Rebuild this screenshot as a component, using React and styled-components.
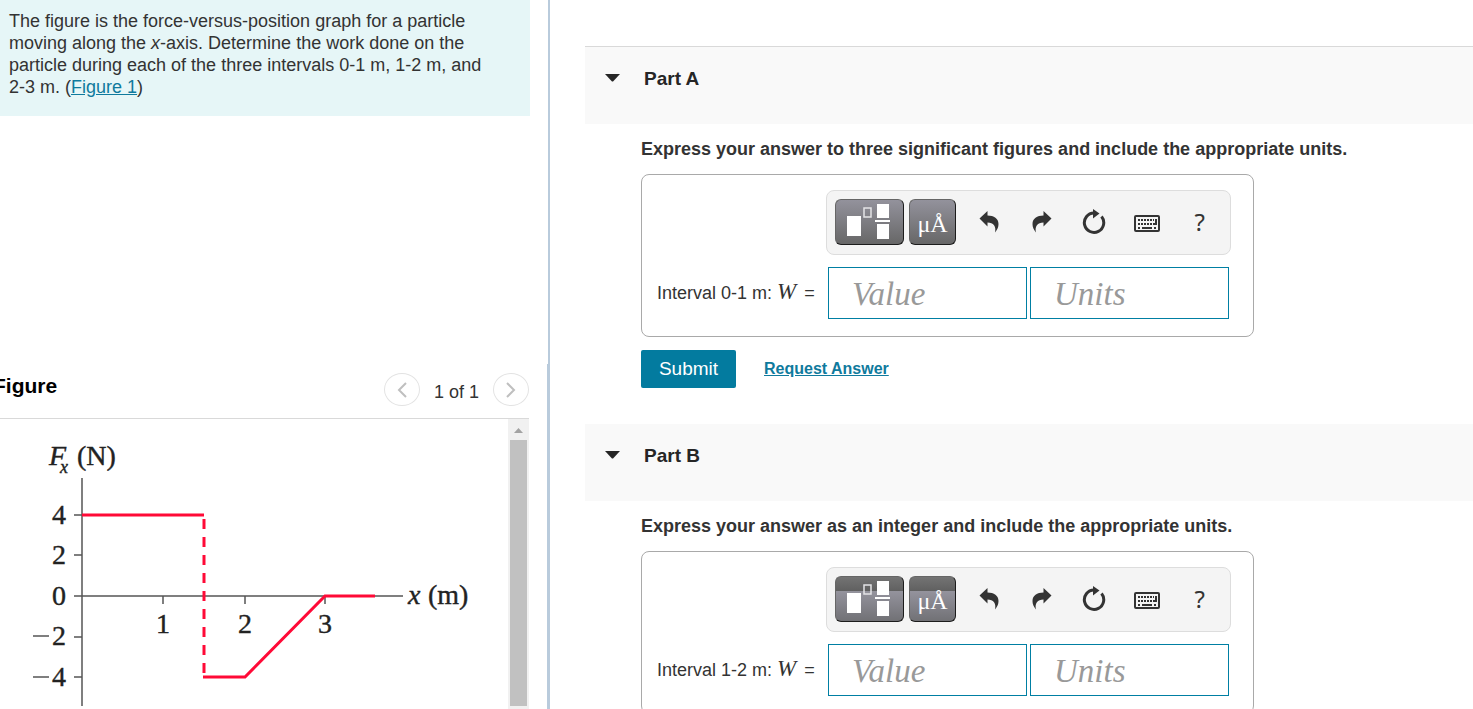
import React from "react";
import styled, { createGlobalStyle } from "styled-components";

const colors = {
    text: "#333333",
    heading: "#262626",
    teal: "#007fa3",
    tealButton: "#037b9f",
    link: "#0f7a9d",
    pale: "#e6f6f7",
    divider: "#b9cbdc",
    band: "#f9f9f9",
    toolbar: "#f4f4f4",
    line: "#d9d9d9",
    plot: "#ff0a37",
};

const sans = `"Liberation Sans", Arial, sans-serif`;
const serif = `"Liberation Serif", "Times New Roman", serif`;

const GlobalStyle = createGlobalStyle`
  * {
    box-sizing: border-box;
  }

  body {
    margin: 0;
    background-color: #ffffff;
    color: ${colors.text};
    font-family: ${sans};
    font-size: 18px;
  }
`;

const Page = styled.div`
  display: grid;
  grid-template-columns: 550px minmax(0, 1fr);
  height: 100vh;
  overflow: hidden;
`;

const Side = styled.aside`
  display: grid;
  grid-template-rows: 364px minmax(0, 1fr);
  min-height: 0;
`;

const ProblemPane = styled.section`
  border-right: 2px solid ${colors.divider};
  padding-right: 18px;
`;

const Problem = styled.p`
  margin: 0;
  padding: 10px 40px 18px 9px;
  background-color: ${colors.pale};
  line-height: 22px;
`;

const Link = styled.a`
  color: ${colors.link};
  text-decoration: underline;
`;

const FigurePane = styled.section`
  display: flex;
  flex-direction: column;
  min-height: 0;
  overflow: hidden;
  border-right: 3px solid ${colors.divider};
  padding-right: 18px;
`;

const FigureHeader = styled.header`
  display: flex;
  align-items: flex-start;
  justify-content: space-between;
  height: 55px;
  padding-top: 9px;
  border-bottom: 1px solid ${colors.line};
`;

const FigureTitle = styled.h2`
  margin: 0 0 0 -7px;
  color: #000000;
  font-size: 21px;
  line-height: 26px;
`;

const Pager = styled.nav`
  display: flex;
  align-items: center;
  gap: 14px;
`;

const PagerLabel = styled.span`
  padding-top: 4px;
  line-height: 22px;
`;

const PagerButton = styled.button`
  display: flex;
  align-items: center;
  justify-content: center;
  width: 36px;
  height: 33px;
  padding: 0;
  border: 1px solid #e3e3e3;
  border-radius: 50%;
  background-color: #ffffff;
`;

const FigureBody = styled.div`
  display: flex;
  flex: 1;
  min-height: 0;
`;

const Plot = styled.svg`
  flex: none;
  width: 508px;
  height: 290px;
  font-family: ${serif};
  font-size: 28px;
  fill: #222222;

  text {
    stroke: #222222;
    stroke-width: 0.4;
  }
`;

const ScrollTrack = styled.div`
  display: flex;
  flex-direction: column;
  flex: 1;
  padding: 0 2px 3px;
  background-color: #f1f1f1;
`;

const ScrollArrow = styled.svg`
  width: 17px;
  height: 21px;
`;

const ScrollThumb = styled.div`
  flex: 1;
  background-color: #c1c1c1;
`;

const Main = styled.main`
  padding: 46px 0 0 35px;
  min-width: 0;
  overflow: hidden;
`;

const Part = styled.section`
  padding-bottom: 36px;
`;

const PartHeader = styled.header`
  display: flex;
  align-items: flex-start;
  gap: 24px;
  height: ${({ $ruled }) => ($ruled ? "78px" : "77px")};
  padding: 21px 20px 0;
  background-color: ${colors.band};
  border-top: ${({ $ruled }) => ($ruled ? `1px solid ${colors.line}` : "none")};
`;

const Toggle = styled.button`
  display: flex;
  height: 20px;
  align-items: center;
  padding: 0;
  border: none;
  background: none;
`;

const PartTitle = styled.h2`
  margin: 0;
  color: ${colors.heading};
  font-size: 19px;
  line-height: 22px;
`;

const PartBody = styled.div`
  padding: 14px 20px 0 56px;
`;

const Instructions = styled.p`
  margin: 0 0 14px;
  font-weight: bold;
  line-height: 22px;
`;

const AnswerBox = styled.div`
  display: inline-grid;
  grid-template-columns: 169px auto;
  row-gap: 12px;
  padding: 15px 22px 17px 15px;
  border: 1px solid #a9a9a9;
  border-radius: 8px;
  vertical-align: top;
`;

const Toolbar = styled.div`
  grid-column: 2;
  display: flex;
  align-items: center;
  height: 65px;
  padding: 0 4px 2px 8px;
  border: 1px solid #dddddd;
  border-radius: 8px;
  background-color: ${colors.toolbar};
`;

const Palettes = styled.div`
  display: flex;
  gap: 5px;
  margin-right: 7px;
`;

const shiny = "linear-gradient(#94939d, #666666)";
const split = "linear-gradient(#757575, #606060 15px, #94939d 15px, #707074)";

const PaletteButton = styled.button`
  display: flex;
  align-items: center;
  justify-content: center;
  width: ${({ $wide }) => ($wide ? "69px" : "47px")};
  height: 46px;
  padding: 0;
  border: 1px solid #666666;
  border-right-color: #1c1c1c;
  border-bottom-color: #1c1c1c;
  border-radius: 6px;
  background: ${({ $split }) => ($split ? split : shiny)};
  background-origin: border-box;
  color: #ffffff;
  font-family: ${serif};
  font-size: 24px;
`;

const UnitsText = styled.span`
  padding-top: 6px;
`;

const ToolButton = styled.button`
  flex: 1;
  display: flex;
  align-items: center;
  justify-content: center;
  height: 46px;
  padding: 0;
  border: none;
  background: none;
  color: ${colors.text};
  font-family: "Noto Sans", sans-serif;
  font-size: 24px;
`;

const AnswerLabel = styled.label`
  padding-bottom: 2px;
  align-self: center;
  line-height: 24px;
  white-space: nowrap;
`;

const Variable = styled.i`
  margin-right: 8px;
  font-family: ${serif};
  font-size: 23px;
`;

const Fields = styled.div`
  display: grid;
  grid-template-columns: 199px 199px;
  gap: 3px;
  padding: 0 2px;
`;

const Field = styled.input`
  width: 100%;
  height: 52px;
  padding: 2px 23px 0;
  border: 1px solid ${colors.teal};
  border-radius: 0;
  font-family: ${serif};
  font-size: 33px;
  font-style: italic;

  &::placeholder {
    color: #999999;
    opacity: 1;
  }
`;

const Actions = styled.div`
  display: flex;
  align-items: center;
  gap: 28px;
  margin-top: 13px;
`;

const Submit = styled.button`
  width: 95px;
  height: 38px;
  padding: 0;
  border: none;
  border-radius: 2px;
  background-color: ${colors.tealButton};
  color: #ffffff;
  font-family: ${sans};
  font-size: 19px;
`;

const RequestLink = styled(Link)`
  font-size: 16px;
  font-weight: bold;
`;

const Chevron = ({ d }) => (
    <svg width="12" height="18" viewBox="0 0 12 18" fill="none" stroke="#bfbfbf" strokeWidth="2">
        <path d={d} />
    </svg>
);

const TemplatesIcon = () => (
    <svg width="48" height="38" viewBox="0 0 48 38" fill="#ffffff">
        <rect x="1" y="13" width="14" height="20" />
        <rect x="18" y="5" width="7" height="9" fill="none" stroke="#e4e4e6" strokeWidth="1.500" />
        <rect x="31" y="1" width="12" height="14" />
        <rect x="29" y="17" width="15" height="2" />
        <rect x="31" y="21" width="12" height="15" />
    </svg>
);

const UndoIcon = () => (
    <svg width="20" height="22" viewBox="0 0 20 22" fill={colors.text}>
        <path d="M0.500 7.500 L8.500 0 V4.500 C15 4.500 19.500 7.500 19.500 13 C19.500 16 18.500 18.500 16 21.500 C17.500 15.500 14.500 11.500 8.500 11.500 V15.500 Z" />
    </svg>
);

const RedoIcon = () => (
    <svg width="20" height="22" viewBox="0 0 20 22" fill={colors.text}>
        <path d="M19.500 7.500 L11.500 0 V4.500 C5 4.500 0.500 7.500 0.500 13 C0.500 16 1.500 18.500 4 21.500 C2.500 15.500 5.500 11.500 11.500 11.500 V15.500 Z" />
    </svg>
);

const ResetIcon = () => (
    <svg width="24" height="25" viewBox="0 0 24 25" fill="none">
        <path d="M12 4 A9.700 9.700 0 1 0 19.500 7.500" stroke={colors.text} strokeWidth="3" />
        <path d="M11 0 L17.500 4.500 L11 9.500 Z" fill={colors.text} />
    </svg>
);

const KeyboardIcon = () => (
    <svg width="26" height="21" viewBox="0 0 26 21" fill="none" stroke={colors.text} strokeWidth="2">
        <rect x="1" y="5" width="24" height="15" rx="1" />
        <path d="M4 9 H20" strokeDasharray="2 1" />
        <path d="M4 13 H19" strokeDasharray="2 1" />
        <path d="M22 8 V13 H19" />
        <path d="M4 17 H6 M8 17 H18 M20 17 H22" />
    </svg>
);

const ForceGraph = () => (
    <Plot viewBox="0 0 508 290" role="img" aria-label="Force versus position">
        <text x="49" y="46" fontStyle="italic">F</text>
        <text x="60" y="54" fontStyle="italic" fontSize="18">x</text>
        <text x="77" y="46">(N)</text>
        <text x="52" y="105">4</text>
        <text x="52" y="145">2</text>
        <text x="52" y="186">0</text>
        <text x="52" y="226">2</text>
        <text x="52" y="267">4</text>
        <text x="163" y="214" textAnchor="middle">1</text>
        <text x="245" y="214" textAnchor="middle">2</text>
        <text x="325" y="214" textAnchor="middle">3</text>
        <text x="408" y="185" fontStyle="italic">x</text>
        <text x="428" y="185">(m)</text>
        <g fill="none" stroke="#555555" strokeWidth="1.500">
            <path d="M33 217 H49 M33 258 H49" />
            <path d="M82 59 V287 M74 177 H403" />
            <path d="M74 96 H82 M74 136 H82 M74 218 H82 M74 258 H82" />
            <path d="M163 177 V185 M245 177 V185 M325 177 V185" />
        </g>
        <g fill="none" stroke={colors.plot} strokeWidth="3">
            <path d="M82 96 H204" />
            <path d="M204 100 V257" strokeDasharray="10 8" />
            <path d="M203 258 H245 L325 177 H375" />
        </g>
    </Plot>
);

const AnswerPart = ({ id, title, instructions, interval, ruled, split }) => (
    <Part>
        <PartHeader $ruled={ruled}>
            <Toggle aria-label={`Collapse ${title}`}>
                <svg width="15" height="8" viewBox="0 0 15 8" fill={colors.heading}>
                    <path d="M0 0 H15 L8.500 7 Q7.500 8 6.500 7 Z" />
                </svg>
            </Toggle>
            <PartTitle>{title}</PartTitle>
        </PartHeader>
        <PartBody>
            <Instructions>{instructions}</Instructions>
            <AnswerBox>
                <Toolbar>
                    <Palettes>
                        <PaletteButton $wide $split={split} aria-label="Templates">
                            <TemplatesIcon />
                        </PaletteButton>
                        <PaletteButton $split={split}>
                            <UnitsText>μÅ</UnitsText>
                        </PaletteButton>
                    </Palettes>
                    <ToolButton aria-label="Undo"><UndoIcon /></ToolButton>
                    <ToolButton aria-label="Redo"><RedoIcon /></ToolButton>
                    <ToolButton aria-label="Reset"><ResetIcon /></ToolButton>
                    <ToolButton aria-label="Keyboard"><KeyboardIcon /></ToolButton>
                    <ToolButton>?</ToolButton>
                </Toolbar>
                <AnswerLabel htmlFor={`${id}-value`}>
                    Interval {interval} m: <Variable>W</Variable>=
                </AnswerLabel>
                <Fields>
                    <Field id={`${id}-value`} placeholder="Value" />
                    <Field aria-label="Units" placeholder="Units" />
                </Fields>
            </AnswerBox>
            <Actions>
                <Submit>Submit</Submit>
                <RequestLink href="#request">Request Answer</RequestLink>
            </Actions>
        </PartBody>
    </Part>
);

const App = () => {
    return (
        <React.Fragment>
            <GlobalStyle />
            <Page>
                <Side>
                    <ProblemPane>
                        <Problem>
                            The figure is the force-versus-position graph for a particle moving
                            along the <i>x</i>-axis. Determine the work done on the particle during
                            each of the three intervals 0-1 m, 1-2 m, and 2-3 m. (
                            <Link href="#figure">Figure 1</Link>)
                        </Problem>
                    </ProblemPane>
                    <FigurePane id="figure">
                        <FigureHeader>
                            <FigureTitle>Figure</FigureTitle>
                            <Pager>
                                <PagerButton aria-label="Previous figure">
                                    <Chevron d="M10 2 L3 9 L10 16" />
                                </PagerButton>
                                <PagerLabel>1 of 1</PagerLabel>
                                <PagerButton aria-label="Next figure">
                                    <Chevron d="M2 2 L9 9 L2 16" />
                                </PagerButton>
                            </Pager>
                        </FigureHeader>
                        <FigureBody>
                            <ForceGraph />
                            <ScrollTrack>
                                <ScrollArrow viewBox="0 0 17 21" fill="#a3a3a3">
                                    <path d="M4 14 H13 L8.500 9 Z" />
                                </ScrollArrow>
                                <ScrollThumb />
                            </ScrollTrack>
                        </FigureBody>
                    </FigurePane>
                </Side>
                <Main>
                    <AnswerPart
                        id="part-a"
                        title="Part A"
                        instructions="Express your answer to three significant figures and include the appropriate units."
                        interval="0-1"
                        ruled
                    />
                    <AnswerPart
                        id="part-b"
                        title="Part B"
                        instructions="Express your answer as an integer and include the appropriate units."
                        interval="1-2"
                        split
                    />
                </Main>
            </Page>
        </React.Fragment>
    );
};

export default App;
